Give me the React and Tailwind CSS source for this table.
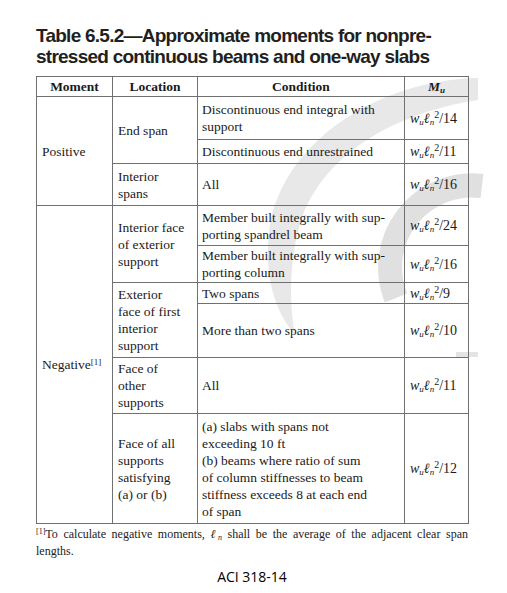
import React from 'react';

const serif = { fontFamily: '"Liberation Serif", "Times New Roman", serif' };

// w_u l_n^2 / d
const Mu = ({ d }) => (
  <span className="whitespace-nowrap text-[14px]">
    <i>w</i>
    <sub className="text-[9px] italic">u</sub>
    <i>ℓ</i>
    <sub className="text-[9px] italic">n</sub>
    <sup className="text-[10px]">2</sup>/{d}
  </span>
);

const cell = 'border border-[#707070] px-[5px] align-middle text-left';
const cond = 'border border-[#707070] pl-[4px] pr-[2px] align-middle text-left';

const Watermark = () => (
  <svg className="absolute inset-0 pointer-events-none" width="507" height="593" viewBox="0 0 507 593">
    <path
      d="M478 78 C380 80 285 140 270 225 C262 280 278 315 295 335 C288 300 290 250 303 215 C328 150 400 112 478 100 Z"
      fill="#e8e8e8"
    />
    <path d="M396 298 A82 82 0 0 1 482 186" fill="none" stroke="#e0e0e0" strokeWidth="24" />
    <rect x="456" y="352" width="22" height="5" fill="#e4e4e4" />
  </svg>
);

export default function App() {
  return (
    <div className="relative w-[507px] h-[593px] bg-white overflow-hidden text-[#1a1a1a]">
      <Watermark />
      <div className="relative pl-[36px] pt-[25px]">
        <h1
          className="text-[19px] leading-[21px] font-bold tracking-[-0.75px] text-[#231f20]"
          style={{ fontFamily: '"Liberation Sans", Arial, sans-serif' }}
        >
          Table 6.5.2—Approximate moments for nonpre-
          <br />
          stressed continuous beams and one-way slabs
        </h1>

        <table
          className="mt-[9px] w-[432px] table-fixed border-collapse text-[13.5px] leading-[17px]"
          style={serif}
        >
          <colgroup>
            <col className="w-[76px]" />
            <col className="w-[85px]" />
            <col className="w-[207px]" />
            <col className="w-[64px]" />
          </colgroup>
          <thead>
            <tr className="h-[20px]">
              <th className="border border-[#707070] font-bold text-center">Moment</th>
              <th className="border border-[#707070] font-bold text-center">Location</th>
              <th className="border border-[#707070] font-bold text-center">Condition</th>
              <th className="border border-[#707070] font-bold text-center">
                <i>M</i>
                <sub className="text-[9px] italic">u</sub>
              </th>
            </tr>
          </thead>
          <tbody>
            <tr className="h-[43px]">
              <td rowSpan={3} className={cell}>Positive</td>
              <td rowSpan={2} className={cell}>End span</td>
              <td className={cond}>
                Discontinuous end integral with
                <br />
                support
              </td>
              <td className={cell}><Mu d="14" /></td>
            </tr>
            <tr className="h-[24px]">
              <td className={cond}>Discontinuous end unrestrained</td>
              <td className={cell}><Mu d="11" /></td>
            </tr>
            <tr className="h-[42px]">
              <td className={cell}>
                Interior
                <br />
                spans
              </td>
              <td className={cond}>All</td>
              <td className={cell}><Mu d="16" /></td>
            </tr>
            <tr className="h-[40px]">
              <td rowSpan={7} className={cell}>
                Negative<sup className="text-[9px]">[1]</sup>
              </td>
              <td rowSpan={2} className={cell}>
                Interior face
                <br />
                of exterior
                <br />
                support
              </td>
              <td className={cond}>
                <span className="whitespace-nowrap">Member built integrally with sup-</span>
                <br />
                porting spandrel beam
              </td>
              <td className={cell}><Mu d="24" /></td>
            </tr>
            <tr className="h-[37px]">
              <td className={cond}>
                <span className="whitespace-nowrap">Member built integrally with sup-</span>
                <br />
                porting column
              </td>
              <td className={cell}><Mu d="16" /></td>
            </tr>
            <tr className="h-[21px]">
              <td rowSpan={2} className={cell}>
                Exterior
                <br />
                face of first
                <br />
                interior
                <br />
                support
              </td>
              <td className={cond}>Two spans</td>
              <td className={cell}><Mu d="9" /></td>
            </tr>
            <tr className="h-[54px]">
              <td className={cond}>More than two spans</td>
              <td className={cell}><Mu d="10" /></td>
            </tr>
            <tr className="h-[56px]">
              <td className={cell}>
                Face of
                <br />
                other
                <br />
                supports
              </td>
              <td className={cond}>All</td>
              <td className={cell}><Mu d="11" /></td>
            </tr>
            <tr className="h-[110px]">
              <td className={cell}>
                Face of all
                <br />
                supports
                <br />
                satisfying
                <br />
                (a) or (b)
              </td>
              <td className={cond}>
                (a) slabs with spans not
                <br />
                exceeding 10 ft
                <br />
                (b) beams where ratio of sum
                <br />
                of column stiffnesses to beam
                <br />
                stiffness exceeds 8 at each end
                <br />
                of span
              </td>
              <td className={cell}><Mu d="12" /></td>
            </tr>
          </tbody>
        </table>

        <p
          className="mt-[2px] w-[432px] text-justify text-[12px] leading-[17px] text-[#222]"
          style={serif}
        >
          <sup className="text-[8px]">[1]</sup>To calculate negative moments, <i>ℓ</i>
          <sub className="text-[8px] italic">n</sub> shall be the average of the adjacent clear span lengths.
        </p>

        <p
          className="mt-[8px] w-[432px] text-center text-[14px] leading-[18px] text-black"
          style={{ fontFamily: '"Open Sans", "Liberation Sans", sans-serif' }}
        >
          ACI 318-14
        </p>
      </div>
    </div>
  );
}
